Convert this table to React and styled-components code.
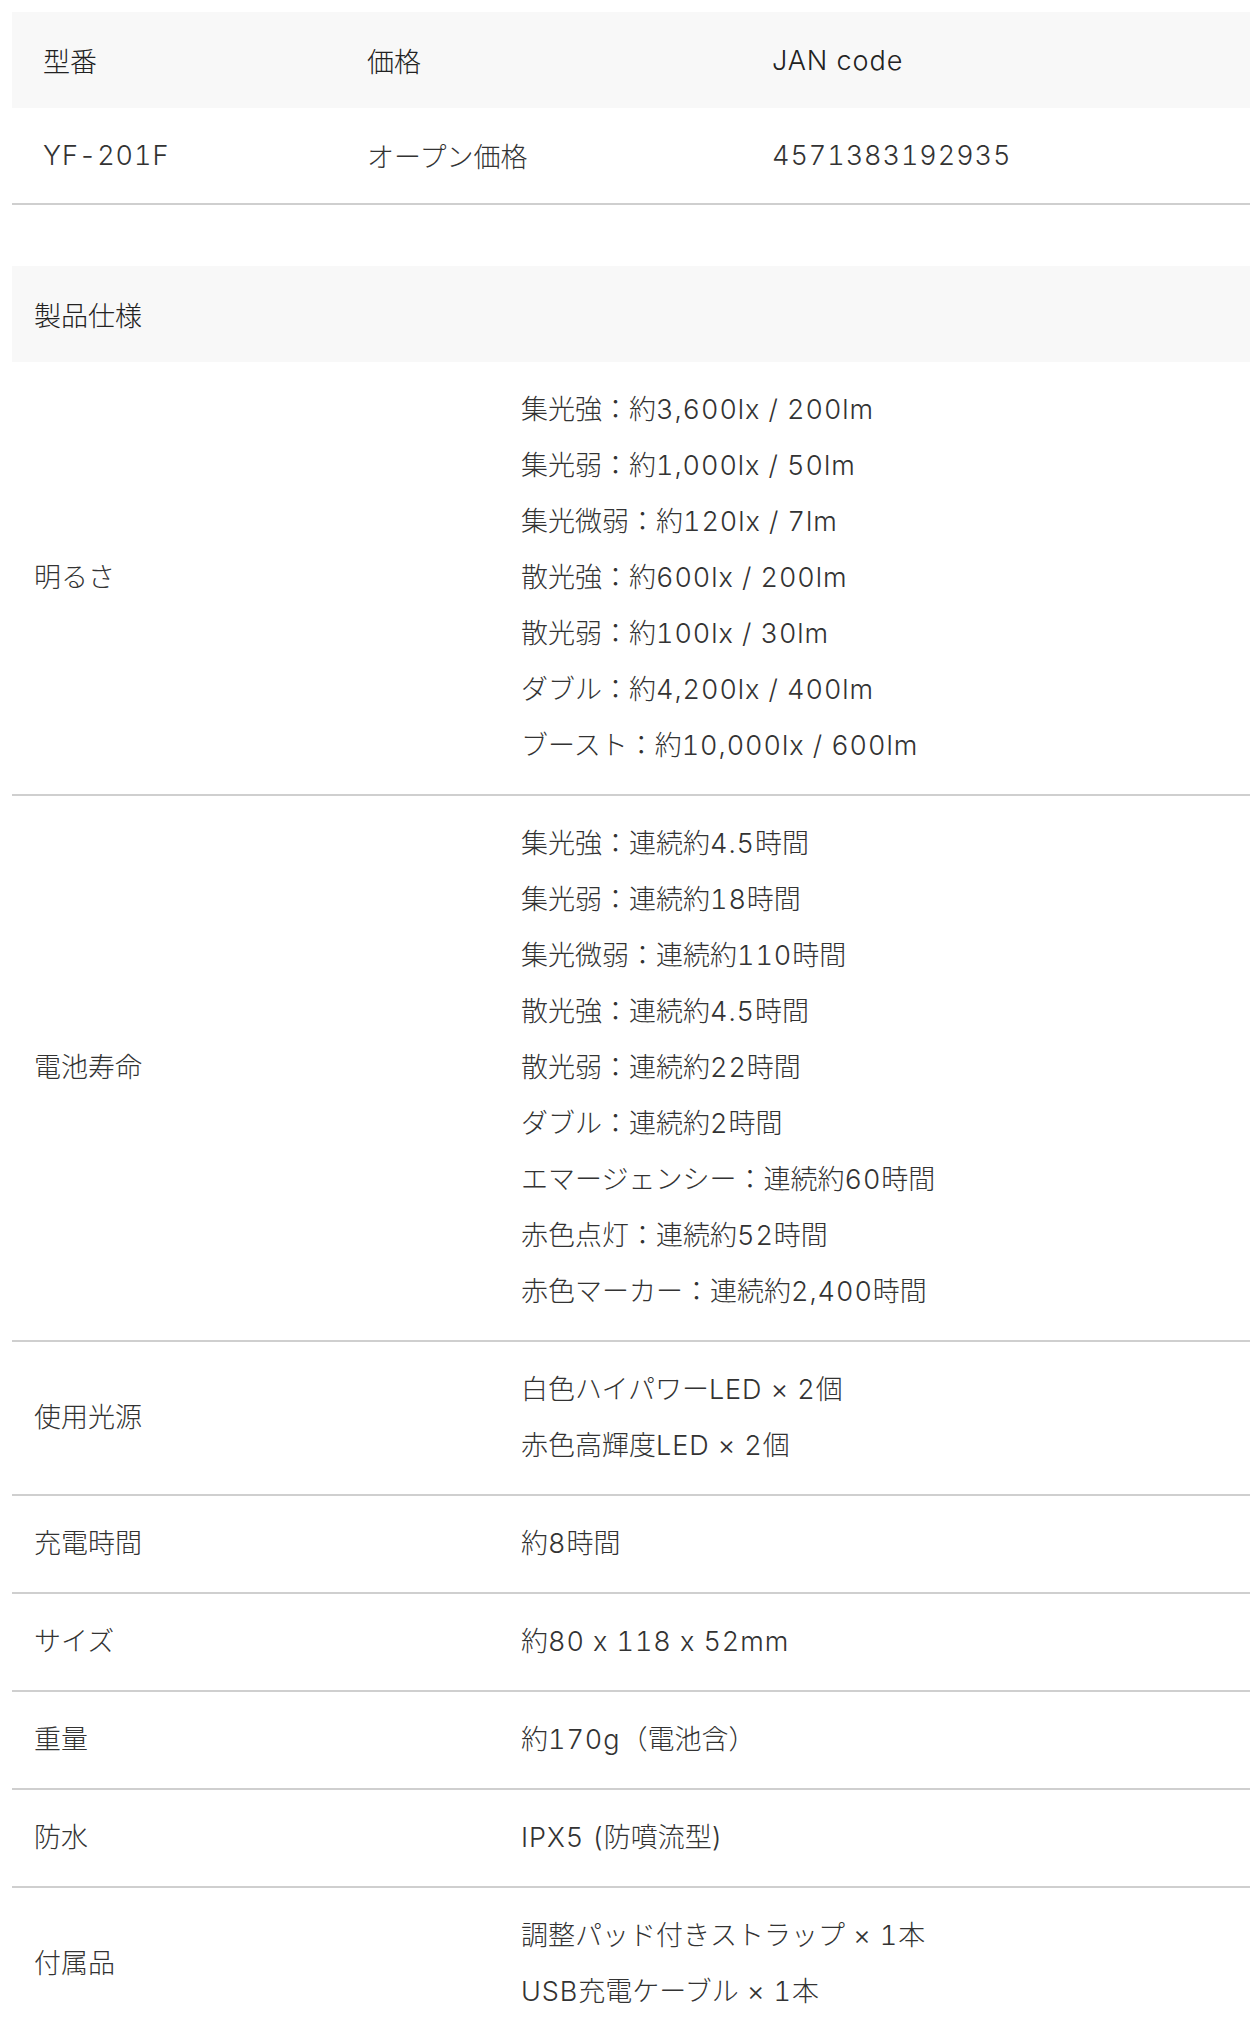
import React from 'react';
import styled, { createGlobalStyle } from 'styled-components';

const GlobalStyle = createGlobalStyle`
  html, body {
    margin: 0;
    padding: 0;
    background: #fff;
  }

  body {
    font-family: "Inter", "Noto Sans CJK JP", sans-serif;
    font-size: 27px;
    font-weight: 300;
    font-feature-settings: "tnum";
    color: #333;
    overflow-x: hidden;
  }
`;

const priceHead = ['型番', '価格', 'JAN code'];
const priceBody = ['YF-201F', 'オープン価格', '4571383192935'];

const specs = [
  {
    label: '明るさ',
    values: [
      '集光強：約3,600lx / 200lm',
      '集光弱：約1,000lx / 50lm',
      '集光微弱：約120lx / 7lm',
      '散光強：約600lx / 200lm',
      '散光弱：約100lx / 30lm',
      'ダブル：約4,200lx / 400lm',
      'ブースト：約10,000lx / 600lm',
    ],
  },
  {
    label: '電池寿命',
    values: [
      '集光強：連続約4.5時間',
      '集光弱：連続約18時間',
      '集光微弱：連続約110時間',
      '散光強：連続約4.5時間',
      '散光弱：連続約22時間',
      'ダブル：連続約2時間',
      'エマージェンシー：連続約60時間',
      '赤色点灯：連続約52時間',
      '赤色マーカー：連続約2,400時間',
    ],
  },
  { label: '使用光源', values: ['白色ハイパワーLED × 2個', '赤色高輝度LED × 2個'] },
  { label: '充電時間', values: ['約8時間'] },
  { label: 'サイズ', values: ['約80 x 118 x 52mm'] },
  { label: '重量', values: ['約170g（電池含）'] },
  { label: '防水', values: ['IPX5 (防噴流型)'] },
  { label: '付属品', values: ['調整パッド付きストラップ × 1本', 'USB充電ケーブル × 1本'] },
];

// latin runs get a touch of tracking, the kana/kanji stay as they are
const Mixed = ({ text }) =>
  text.split(/([\x20-\x7E×]+)/).map((part, i) =>
    /[\x20-\x7E×]/.test(part) ? <Latin key={i}>{part}</Latin> : part
  );

const App = () => {
  return (
    <>
      <GlobalStyle />
      <Page>
        <PriceTable>
          <PriceRow head>
            {priceHead.map((t) => (
              <PriceCell key={t} head>
                <Mixed text={t} />
              </PriceCell>
            ))}
          </PriceRow>
          <PriceRow>
            {priceBody.map((t) => (
              <PriceCell key={t}>
                <Mixed text={t} />
              </PriceCell>
            ))}
          </PriceRow>
        </PriceTable>

        <SpecTable>
          <SectionHead>製品仕様</SectionHead>
          {specs.map((row) => (
            <SpecRow key={row.label}>
              <SpecLabel>{row.label}</SpecLabel>
              <SpecValues>
                {row.values.map((v) => (
                  <ValueLine key={v}>
                    <Mixed text={v} />
                  </ValueLine>
                ))}
              </SpecValues>
            </SpecRow>
          ))}
        </SpecTable>
      </Page>
    </>
  );
};

const Page = styled.div`
  width: 1238px;
  padding: 12px 0 0 12px;
`;

const Latin = styled.span`
  letter-spacing: 0.035em;
`;

const PriceTable = styled.div`
  display: flex;
  flex-direction: column;
`;

const PriceRow = styled.div`
  display: grid;
  grid-template-columns: 324px 405px 1fr;
  align-items: center;
  height: ${(p) => (p.head ? '96px' : '95px')};
  background: ${(p) => (p.head ? '#f8f8f8' : '#fff')};
  border-bottom: ${(p) => (p.head ? 'none' : '2px solid #cfcfcf')};
`;

const PriceCell = styled.div`
  padding-left: 31px;
  color: ${(p) => (p.head ? '#222' : '#333')};
`;

const SpecTable = styled.div`
  margin-top: 61px;
  display: flex;
  flex-direction: column;
`;

const SectionHead = styled.div`
  height: 96px;
  display: flex;
  align-items: center;
  padding-left: 22px;
  background: #f8f8f8;
  color: #222;
`;

const SpecRow = styled.div`
  display: grid;
  grid-template-columns: 487px 1fr;
  align-items: center;
  padding: 20px 0;
  border-bottom: 2px solid #cfcfcf;
`;

const SpecLabel = styled.div`
  padding-left: 22px;
  line-height: 56px;
`;

const SpecValues = styled.div`
  display: flex;
  flex-direction: column;
  padding-left: 22px;
`;

const ValueLine = styled.div`
  line-height: 56px;
  white-space: nowrap;
`;

export default App;
